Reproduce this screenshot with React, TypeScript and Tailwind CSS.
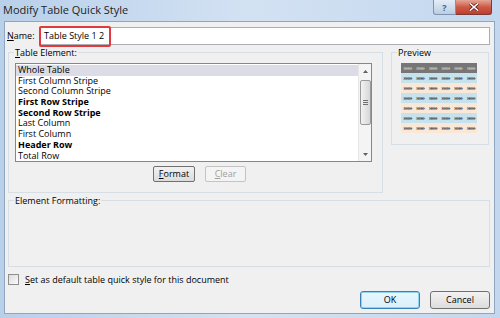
import React from "react";

// 표 요소 목록 (굵게 표시된 항목은 서식이 지정된 요소)
const elements: { label: string; bold?: boolean }[] = [
  { label: "Whole Table" },
  { label: "First Column Stripe" },
  { label: "Second Column Stripe" },
  { label: "First Row Stripe", bold: true },
  { label: "Second Row Stripe", bold: true },
  { label: "Last Column" },
  { label: "First Column" },
  { label: "Header Row", bold: true },
  { label: "Total Row" },
];

const previewRows = ["head", "blue", "peach", "blue", "peach", "blue", "peach"];

function ScrollBar() {
  return (
    <div className="flex h-full w-[13px] flex-col items-center border-l border-[#e6e6e6] bg-[#f4f4f4]">
      <div className="flex h-[14px] w-full items-center justify-center">
        <svg width="5" height="3" viewBox="0 0 5 3">
          <path d="M0 3 L2.5 0 L5 3 Z" fill="#606060" />
        </svg>
      </div>
      <div className="mt-[2px] flex h-[45px] w-[11px] items-center justify-center rounded-[2px] border border-[#9a9a9a] bg-gradient-to-r from-[#f2f2f2] to-[#d6d6d6]">
        <div className="flex flex-col gap-[1px]">
          <div className="h-px w-[5px] bg-[#707070]" />
          <div className="h-px w-[5px] bg-[#707070]" />
          <div className="h-px w-[5px] bg-[#707070]" />
        </div>
      </div>
      <div className="flex-1" />
      <div className="flex h-[14px] w-full items-center justify-center">
        <svg width="5" height="3" viewBox="0 0 5 3">
          <path d="M0 0 L5 0 L2.5 3 Z" fill="#606060" />
        </svg>
      </div>
    </div>
  );
}

export default function App() {
  return (
    <div className="flex h-[318px] w-[500px] flex-col overflow-hidden bg-gradient-to-r from-[#b9d0ea] via-[#d3e2f3] to-[#c3d7ee] font-['Segoe_UI','Open_Sans',sans-serif] text-[9px] text-black">
      {/* 타이틀 바 */}
      <div className="flex h-[21px] items-start justify-between">
        <div className="pl-[3px] pt-[3px] text-[11px] leading-[14px] text-[#1e1e1e]">
          Modify Table Quick Style
        </div>
        <div className="mr-[8px] flex">
          <div className="flex h-[15px] w-[23px] items-center justify-center rounded-bl-[3px] border border-t-0 border-[#7f93ad] bg-gradient-to-b from-[#e4edf7] to-[#bccde2] text-[9px] font-bold leading-none text-[#4d6180]">
            ?
          </div>
          <div className="flex h-[15px] w-[36px] items-center justify-center rounded-br-[3px] border border-l-0 border-t-0 border-[#7a3a36] bg-gradient-to-b from-[#e5a595] via-[#cc5a48] to-[#c23b2c]">
            <svg width="10" height="8" viewBox="0 0 10 8">
              <path d="M1 0.5 L9 7.5 M9 0.5 L1 7.5" stroke="#5a1c16" strokeWidth="3" />
              <path d="M1 0.5 L9 7.5 M9 0.5 L1 7.5" stroke="#ffffff" strokeWidth="1.6" />
            </svg>
          </div>
        </div>
      </div>

      {/* 본문 */}
      <div className="ml-[4px] flex h-[293px] w-[491px] flex-col border border-[#8fa5c0] bg-[#f0f0f0]">
        {/* 이름 입력 */}
        <div className="mt-[4px] flex h-[19px] items-center">
          <div className="w-[34px] pl-[2px]">
            <span className="underline">N</span>ame:
          </div>
          <div className="relative flex h-[18px] w-[451px] items-center border border-[#abadb3] bg-white pl-[4px]">
            Table Style 1 2
            <div className="absolute left-[-1px] top-[-2px] h-[21px] w-[72px] rounded-[2px] border-2 border-[#e03a3e]" />
          </div>
        </div>

        {/* 표 요소 + 미리보기 */}
        <div className="mt-[2px] flex items-start">
          <fieldset className="ml-[3px] h-[146px] w-[375px] border border-[#d5dfe5]">
            <legend className="ml-[5px] px-[1px] leading-[11px]">
              <span className="underline">T</span>able Element:
            </legend>
            <div className="ml-[6px] mt-[5px] flex h-[99px] w-[357px] border border-[#828790] bg-white">
              <div className="flex-1 pt-[1px]">
                {elements.map((el, i) => (
                  <div
                    key={el.label}
                    className={`h-[10.7px] pl-[2px] leading-[10.7px] ${i === 0 ? "bg-[#dcdce6]" : ""} ${el.bold ? "font-bold" : ""}`}
                  >
                    {el.label}
                  </div>
                ))}
              </div>
              <ScrollBar />
            </div>
            <div className="mt-[4px] flex justify-center gap-[10px] pl-[8px]">
              <div className="flex h-[16px] w-[42px] items-center justify-center rounded-[2px] border border-[#707070] bg-gradient-to-b from-[#f2f2f2] to-[#dcdcdc]">
                <span className="underline">F</span>ormat
              </div>
              <div className="flex h-[16px] w-[41px] items-center justify-center rounded-[2px] border border-[#c4c4c4] bg-[#f4f4f4] text-[#a0a0a0]">
                <span className="underline">C</span>lear
              </div>
            </div>
          </fieldset>

          <fieldset className="ml-[8px] h-[98px] w-[98px] border border-[#d5dfe5]">
            <legend className="ml-[5px] px-[1px] leading-[11px]">Preview</legend>
            <div className="ml-[9px] mt-[5px] w-[76px]">
              {previewRows.map((row, r) => (
                <div
                  key={r}
                  className={`grid h-[10px] grid-cols-6 ${row === "head" ? "bg-[#767676] text-[#c8c8c8]" : row === "blue" ? "bg-[#c6e2ec] text-[#3a3a3a]" : "bg-[#fbe7d6] text-[#3a3a3a]"}`}
                >
                  {[0, 1, 2, 3, 4, 5].map((c) => (
                    <div key={c} className="flex items-center justify-center text-[6px] font-bold leading-none tracking-[-1px]">
                      »»»
                    </div>
                  ))}
                </div>
              ))}
            </div>
          </fieldset>
        </div>

        {/* 요소 서식 */}
        <fieldset className="ml-[3px] mt-[2px] h-[72px] w-[482px] border border-[#d5dfe5]">
          <legend className="ml-[5px] px-[1px] leading-[11px]">Element Formatting:</legend>
        </fieldset>

        {/* 기본값 체크박스 */}
        <div className="mt-[6px] flex items-center pl-[3px]">
          <div className="h-[11px] w-[11px] border border-[#8f8f8f] bg-gradient-to-br from-[#dcdcdc] to-[#fbfbfb]" />
          <div className="ml-[6px]">
            <span className="underline">S</span>et as default table quick style for this document
          </div>
        </div>

        {/* 확인 / 취소 */}
        <div className="mr-[4px] mt-[4px] flex justify-end gap-[10px]">
          <div className="flex h-[18px] w-[60px] items-center justify-center rounded-[3px] border border-[#3c7fb1] bg-gradient-to-b from-[#eaf6fd] to-[#d9f0fc] shadow-[inset_0_0_0_1px_#8fd3f3]">
            OK
          </div>
          <div className="flex h-[18px] w-[60px] items-center justify-center rounded-[3px] border border-[#707070] bg-gradient-to-b from-[#f2f2f2] to-[#dddddd]">
            Cancel
          </div>
        </div>
      </div>
    </div>
  );
}
